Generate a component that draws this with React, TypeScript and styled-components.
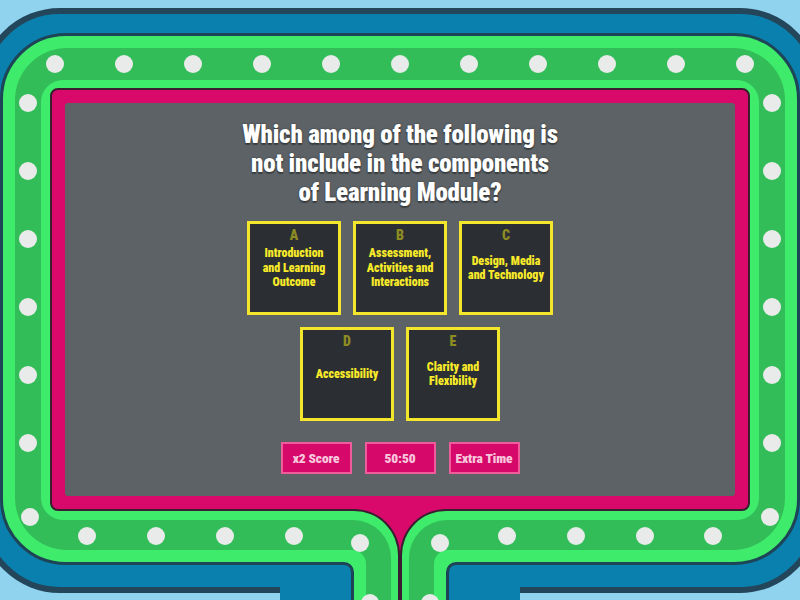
import React from 'react';
import styled, { createGlobalStyle } from 'styled-components';

const GlobalStyle = createGlobalStyle`
  html, body {
    margin: 0;
    padding: 0;
    background: #8fd3ef;
  }
`;

const FONT = `"Roboto Condensed", Roboto, "Liberation Sans", sans-serif`;

const Page = styled.div`
  position: relative;
  width: 800px;
  height: 600px;
  overflow: hidden;
  padding-top: 8px;
  box-sizing: border-box;
  display: flex;
  flex-direction: column;
  align-items: flex-start;
  background: #8fd3ef;
  font-family: ${FONT};
`;

const Cabinet = styled.div`
  margin-left: -20px;
  width: 840px;
  height: 585px;
  flex-shrink: 0;
  box-sizing: border-box;
  border: 6px solid #24465a;
  border-radius: 80px;
  background: #0a80ae;
  padding: 19px 14px 0 14px;
  display: flex;
`;

const Rim = styled.div`
  position: relative;
  width: 800px;
  height: 532px;
  flex-shrink: 0;
  box-sizing: border-box;
  border: 3px solid #1e4457;
  border-radius: 66px;
  background: #3eeb6a;
  padding: 12px;
  display: flex;
`;

const DarkBand = styled.div`
  flex: 1;
  display: flex;
  background: #33bd58;
  border-radius: 52px;
  padding: 32px 26px 30px 26px;
`;

const InnerBand = styled.div`
  flex: 1;
  display: flex;
  background: #3eeb6a;
  border-radius: 22px;
  padding: 8px 9px 9px 9px;
`;

const PinkPanel = styled.div`
  flex: 1;
  display: flex;
  border: 2px solid #3a1d30;
  border-radius: 8px;
  background: #d9086b;
  padding: 13px;
`;

const Screen = styled.div`
  flex: 1;
  display: flex;
  flex-direction: column;
  align-items: center;
  background: #5c6266;
  border-radius: 3px;
  padding-top: 17px;
`;

const Question = styled.div`
  color: #ffffff;
  font-weight: 900;
  font-size: 25px;
  line-height: 29px;
  letter-spacing: -0.2px;
  text-align: center;
  white-space: nowrap;
  text-shadow: 0 0 2px rgba(20, 20, 20, 0.55), 0 2px 1px rgba(20, 20, 20, 0.4);
`;

const Answers = styled.div`
  margin-top: 14px;
  display: flex;
  flex-direction: column;
  align-items: center;
  gap: 12px;
`;

const AnswerRow = styled.div`
  display: flex;
  gap: 12px;
`;

const Card = styled.div`
  width: 94px;
  height: 94px;
  box-sizing: border-box;
  border: 3px solid #f4e62b;
  background: #2b2f33;
  display: grid;
  padding: 3px 1px;
`;

const Letter = styled.div`
  grid-area: 1 / 1;
  align-self: start;
  text-align: center;
  color: #8d8c22;
  font-weight: 900;
  font-size: 14px;
  line-height: 16px;
`;

const AnswerText = styled.div`
  grid-area: 1 / 1;
  align-self: center;
  text-align: center;
  color: #f8ea29;
  font-weight: 900;
  font-size: 12px;
  line-height: 14.5px;
  white-space: nowrap;
`;

const Powerups = styled.div`
  margin-top: 21px;
  display: flex;
  gap: 13px;
`;

const Powerup = styled.div`
  width: 71px;
  height: 32px;
  box-sizing: border-box;
  border: 2px solid #ee5c9c;
  background: #d6086a;
  color: #f8c6dc;
  font-weight: 900;
  font-size: 13.5px;
  letter-spacing: -0.1px;
  white-space: nowrap;
  display: flex;
  align-items: center;
  justify-content: center;
`;

/* neck joining the screen to the stand, laid over the bottom of the rim */
const Neck = styled.div`
  position: absolute;
  left: 277px;
  top: 473px;
  width: 240px;
  height: 112px;
  display: flex;
  justify-content: space-between;
  background: #d9086b;
  z-index: 1;
`;

const LegOuter = styled.div<{ $side: 'left' | 'right' }>`
  width: 112px;
  display: flex;
  background: #3eeb6a;
  border-top: 2px solid #3a1d30;
  ${({ $side }) => ($side === 'left'
    ? 'border-right: 2px solid #3a1d30; border-top-right-radius: 46px; padding: 9px 7px 0 0;'
    : 'border-left: 2px solid #3a1d30; border-top-left-radius: 46px; padding: 9px 0 0 7px;')}
`;

const LegDark = styled.div<{ $side: 'left' | 'right' }>`
  flex: 1;
  display: flex;
  background: #33bd58;
  ${({ $side }) => ($side === 'left'
    ? 'border-top-right-radius: 38px; padding: 30px 25px 0 0;'
    : 'border-top-left-radius: 38px; padding: 30px 0 0 25px;')}
`;

const LegLight = styled.div<{ $side: 'left' | 'right' }>`
  flex: 1;
  display: flex;
  background: #3eeb6a;
  ${({ $side }) => ($side === 'left'
    ? 'border-top-right-radius: 14px; padding: 12px 12px 0 0;'
    : 'border-top-left-radius: 14px; padding: 12px 0 0 12px;')}
`;

const LegHole = styled.div<{ $side: 'left' | 'right' }>`
  flex: 1;
  background: #0a80ae;
  border-top: 3px solid #1e4457;
  ${({ $side }) => ($side === 'left'
    ? 'border-right: 3px solid #1e4457; border-top-right-radius: 10px;'
    : 'border-left: 3px solid #1e4457; border-top-left-radius: 10px;')}
`;

const Dot = styled.span<{ $x: number; $y: number }>`
  position: absolute;
  left: ${({ $x }) => $x - 12}px;
  top: ${({ $y }) => $y - 45}px;
  width: 18px;
  height: 18px;
  border-radius: 50%;
  background: #e9ebea;
  z-index: 2;
`;

const dots: [number, number][] = [
  ...[55, 124, 193, 262, 331, 400, 469, 538, 607, 676, 745].map((x): [number, number] => [x, 64]),
  ...[103, 171, 239, 307, 375, 443].map((y): [number, number] => [28, y]),
  ...[103, 171, 239, 307, 375, 443].map((y): [number, number] => [772, y]),
  [30, 517],
  [770, 517],
  ...[87, 156, 225, 294, 507, 576, 645, 713].map((x): [number, number] => [x, 536]),
  [360, 543],
  [440, 543],
  [370, 603],
  [430, 603],
];

const rows = [
  [
    { letter: 'A', text: ['Introduction', 'and Learning', 'Outcome'] },
    { letter: 'B', text: ['Assessment,', 'Activities and', 'Interactions'] },
    { letter: 'C', text: ['Design, Media', 'and Technology'] },
  ],
  [
    { letter: 'D', text: ['Accessibility'] },
    { letter: 'E', text: ['Clarity and', 'Flexibility'] },
  ],
];

const Leg = ({ side }: { side: 'left' | 'right' }) => (
  <LegOuter $side={side}>
    <LegDark $side={side}>
      <LegLight $side={side}>
        <LegHole $side={side} />
      </LegLight>
    </LegDark>
  </LegOuter>
);

const App = () => (
  <>
    <GlobalStyle />
    <Page>
      <Cabinet>
        <Rim>
          <DarkBand>
            <InnerBand>
              <PinkPanel>
                <Screen>
                  <Question>
                    Which among of the following is
                    <br />
                    not include in the components
                    <br />
                    of Learning Module?
                  </Question>
                  <Answers>
                    {rows.map((row) => (
                      <AnswerRow key={row[0].letter}>
                        {row.map((item) => (
                          <Card key={item.letter}>
                            <Letter>{item.letter}</Letter>
                            <AnswerText>
                              {item.text.map((line) => (
                                <div key={line}>{line}</div>
                              ))}
                            </AnswerText>
                          </Card>
                        ))}
                      </AnswerRow>
                    ))}
                  </Answers>
                  <Powerups>
                    <Powerup>x2 Score</Powerup>
                    <Powerup>50:50</Powerup>
                    <Powerup>Extra Time</Powerup>
                  </Powerups>
                </Screen>
              </PinkPanel>
            </InnerBand>
          </DarkBand>
          <Neck>
            <Leg side="left" />
            <Leg side="right" />
          </Neck>
          {dots.map(([x, y]) => (
            <Dot key={`${x}-${y}`} $x={x} $y={y} />
          ))}
        </Rim>
      </Cabinet>
    </Page>
  </>
);

export default App;
